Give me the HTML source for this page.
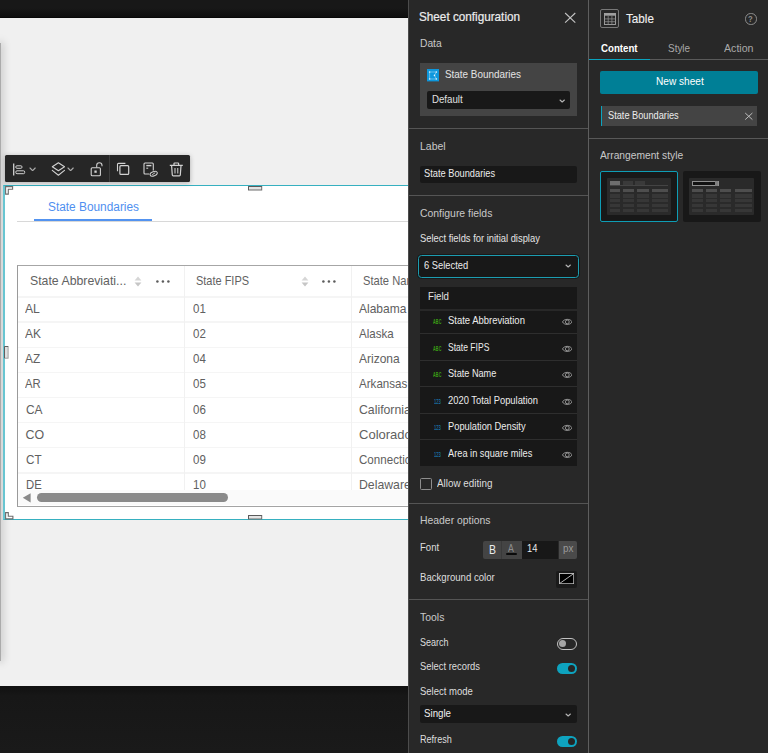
<!DOCTYPE html>
<html lang="en"><head><meta charset="utf-8"><title>Table widget - Sheet configuration</title>
<style>
html,body{margin:0;padding:0;background:#181818;}
body{width:768px;height:753px;position:relative;overflow:hidden;font-family:"Liberation Sans",sans-serif;}
.r{position:absolute;display:block;}
.t{position:absolute;white-space:nowrap;line-height:1;transform-origin:0 0;}
#cv{position:absolute;left:0;top:0;width:408px;height:753px;overflow:hidden;}
#pn{position:absolute;left:0;top:0;width:768px;height:753px;}

</style></head><body>
<div id="cv">
<div class="r" style="left:0.00px;top:0.00px;width:768.00px;height:17.60px;background:#171717;background:linear-gradient(#181818 0,#181818 8px,#0e0e0e 100%);"></div>
<div class="r" style="left:0.00px;top:686.20px;width:768.00px;height:66.80px;background:#181818;background:linear-gradient(#111 0,#171717 10px,#1a1a1a 100%);"></div>
<div class="r" style="left:0.00px;top:17.60px;width:408.00px;height:668.60px;background:#f0f0f0;"></div>
<div class="r" style="left:0.00px;top:16.90px;width:408.00px;height:0.70px;background:#080808;"></div>
<div class="r" style="left:-1.00px;top:43.00px;width:1.90px;height:617.70px;background:#ababab;box-shadow:0 0 9px 1px rgba(0,0,0,.28);"></div>
<div class="r" style="left:3.1px;top:184.9px;width:420px;height:335.2px;background:#fff;border-left:2.1px solid #68c5d1;border-top:1.7px solid #36b0c0;border-bottom:1.5px solid #36b0c0;box-sizing:border-box"></div>
<div class="r" style="left:4.80px;top:154.50px;width:185.70px;height:27.30px;background:#262626;border-radius:1.5px;box-shadow:0 1px 5px rgba(0,0,0,.28);"></div>
<div class="r" style="left:109.00px;top:154.50px;width:0.80px;height:27.30px;background:#3e3e3e;"></div>
<div class="t" style="left:48.03px;top:201px;font-size:12.5px;color:#4f8ff0;transform:scaleX(0.9489);">State Boundaries</div>
<div class="r" style="left:17.00px;top:220.70px;width:391.00px;height:1.00px;background:#d8d8d8;"></div>
<div class="r" style="left:34.00px;top:219.00px;width:118.00px;height:2.10px;background:#5393f0;"></div>
<div class="r" style="left:17.2px;top:264.9px;width:420px;height:242.1px;background:#fff;border:1.3px solid #9a9a9a;border-top:1.9px solid #a6a6a6;border-bottom:1.7px solid #a4a4a4;box-sizing:border-box"></div>
<div class="r" style="left:18.00px;top:296.20px;width:390.00px;height:1.40px;background:#f5f5f5;"></div>
<div class="r" style="left:18.00px;top:321.35px;width:390.00px;height:1.40px;background:#f5f5f5;"></div>
<div class="r" style="left:18.00px;top:346.50px;width:390.00px;height:1.40px;background:#f5f5f5;"></div>
<div class="r" style="left:18.00px;top:371.65px;width:390.00px;height:1.40px;background:#f5f5f5;"></div>
<div class="r" style="left:18.00px;top:396.80px;width:390.00px;height:1.40px;background:#f5f5f5;"></div>
<div class="r" style="left:18.00px;top:421.95px;width:390.00px;height:1.40px;background:#f5f5f5;"></div>
<div class="r" style="left:18.00px;top:447.10px;width:390.00px;height:1.40px;background:#f5f5f5;"></div>
<div class="r" style="left:18.00px;top:472.25px;width:390.00px;height:1.40px;background:#f5f5f5;"></div>
<div class="r" style="left:183.90px;top:266.40px;width:1.10px;height:223.60px;background:#f1f1f1;"></div>
<div class="r" style="left:350.90px;top:266.40px;width:1.10px;height:223.60px;background:#f1f1f1;"></div>
<div class="t" style="left:29.50px;top:275px;font-size:12.4px;color:#626262;transform:scaleX(0.9918);">State Abbreviati...</div>
<div class="t" style="left:196.46px;top:275px;font-size:12.4px;color:#626262;transform:scaleX(0.8856);">State FIPS</div>
<div class="t" style="left:363.15px;top:275px;font-size:12.4px;color:#626262;transform:scaleX(0.9000);">State Name</div>
<div class="t" style="left:25.11px;top:303px;font-size:12.4px;color:#606060;transform:scaleX(0.9824);">AL</div>
<div class="t" style="left:192.94px;top:303px;font-size:12.4px;color:#606060;transform:scaleX(0.9300);">01</div>
<div class="t" style="left:359.42px;top:303px;font-size:12.4px;color:#606060;transform:scaleX(0.9685);">Alabama</div>
<div class="t" style="left:25.12px;top:328px;font-size:12.4px;color:#606060;transform:scaleX(0.9673);">AK</div>
<div class="t" style="left:192.94px;top:328px;font-size:12.4px;color:#606060;transform:scaleX(0.9300);">02</div>
<div class="t" style="left:359.43px;top:328px;font-size:12.4px;color:#606060;transform:scaleX(0.9323);">Alaska</div>
<div class="t" style="left:25.12px;top:353px;font-size:12.4px;color:#606060;transform:scaleX(0.9593);">AZ</div>
<div class="t" style="left:192.94px;top:353px;font-size:12.4px;color:#606060;transform:scaleX(0.9300);">04</div>
<div class="t" style="left:359.42px;top:353px;font-size:12.4px;color:#606060;transform:scaleX(0.9680);">Arizona</div>
<div class="t" style="left:25.14px;top:378px;font-size:12.4px;color:#606060;transform:scaleX(0.9115);">AR</div>
<div class="t" style="left:192.94px;top:378px;font-size:12.4px;color:#606060;transform:scaleX(0.9300);">05</div>
<div class="t" style="left:359.43px;top:378px;font-size:12.4px;color:#606060;transform:scaleX(0.9350);">Arkansas</div>
<div class="t" style="left:25.52px;top:404px;font-size:12.4px;color:#606060;transform:scaleX(0.9637);">CA</div>
<div class="t" style="left:192.94px;top:404px;font-size:12.4px;color:#606060;transform:scaleX(0.9300);">06</div>
<div class="t" style="left:359.40px;top:404px;font-size:12.4px;color:#606060;transform:scaleX(0.9900);">California</div>
<div class="t" style="left:25.50px;top:429px;font-size:12.4px;color:#606060;transform:scaleX(1.0000);">CO</div>
<div class="t" style="left:192.94px;top:429px;font-size:12.4px;color:#606060;transform:scaleX(0.9300);">08</div>
<div class="t" style="left:359.38px;top:429px;font-size:12.4px;color:#606060;transform:scaleX(1.0500);">Colorado</div>
<div class="t" style="left:25.53px;top:454px;font-size:12.4px;color:#606060;transform:scaleX(0.9438);">CT</div>
<div class="t" style="left:192.94px;top:454px;font-size:12.4px;color:#606060;transform:scaleX(0.9300);">09</div>
<div class="t" style="left:359.43px;top:454px;font-size:12.4px;color:#606060;transform:scaleX(0.9350);">Connecticut</div>
<div class="t" style="left:25.64px;top:479px;font-size:12.4px;color:#606060;transform:scaleX(0.9115);">DE</div>
<div class="t" style="left:192.94px;top:479px;font-size:12.4px;color:#606060;transform:scaleX(0.9300);">10</div>
<div class="t" style="left:359.40px;top:479px;font-size:12.4px;color:#606060;transform:scaleX(0.9900);">Delaware</div>
<div class="r" style="left:18.00px;top:490.00px;width:390.00px;height:15.40px;background:#fafafa;"></div>
<div class="r" style="left:37.00px;top:493.00px;width:191.00px;height:9.30px;background:#8a8a8a;border-radius:5px;"></div>
<svg class="r" style="left:22px;top:492px" width="10" height="12" viewBox="0 0 10 12"><path d="M0.8 5.8 L8.6 1.2 L8.6 10.4 Z" fill="#8a8a8a"/></svg>
<svg class="r" style="left:11.5px;top:162.5px" width="15" height="14" viewBox="0 0 15 14"><path d="M1.7 0.5 V12.6" stroke="#d2d2d2" stroke-width="1.3" fill="none"/><rect x="3.8" y="2.8" width="6.2" height="2.5" rx="1.1" fill="none" stroke="#d2d2d2" stroke-width="1"/><rect x="3.8" y="7.8" width="8.9" height="2.9" rx="1.2" fill="none" stroke="#d2d2d2" stroke-width="1"/></svg>
<svg class="r" style="left:28.6px;top:166.6px" width="7.2" height="4.7" viewBox="-1 -1 7.2 4.7"><path d="M0 0 L2.6 2.7 L5.2 0" stroke="#aaaaaa" stroke-width="1.15" stroke-linejoin="round" stroke-linecap="round" fill="none"/></svg>
<svg class="r" style="left:50.5px;top:161.8px" width="15" height="15" viewBox="0 0 15 15"><path d="M7.4 0.8 L13.5 4.8 L7.4 8.8 L1.3 4.8 Z" fill="none" stroke="#d2d2d2" stroke-width="1.1" stroke-linejoin="round"/><path d="M1.3 8.4 L7.4 13.2 L13.5 8.4" fill="none" stroke="#d2d2d2" stroke-width="1.1" stroke-linejoin="round" stroke-linecap="round"/></svg>
<svg class="r" style="left:67.4px;top:166.6px" width="7.2" height="4.7" viewBox="-1 -1 7.2 4.7"><path d="M0 0 L2.6 2.7 L5.2 0" stroke="#aaaaaa" stroke-width="1.15" stroke-linejoin="round" stroke-linecap="round" fill="none"/></svg>
<svg class="r" style="left:89.5px;top:161.5px" width="14" height="15" viewBox="0 0 14 15"><rect x="1.2" y="5.8" width="9.2" height="8" rx="1" fill="none" stroke="#d2d2d2" stroke-width="1.1"/><rect x="4.4" y="8.5" width="2.3" height="2.3" fill="#d2d2d2"/><path d="M6.7 5.6 V3.2 C6.7 0 12 0 12 3.2 V4.2" fill="none" stroke="#d2d2d2" stroke-width="1.1"/></svg>
<svg class="r" style="left:116px;top:162px" width="15" height="14" viewBox="0 0 15 14"><rect x="3.9" y="3.7" width="8.8" height="8.7" rx="1" fill="none" stroke="#d2d2d2" stroke-width="1.2"/><path d="M1.5 9.2 V2.4 C1.5 1.8 1.9 1.4 2.5 1.4 H9.4" fill="none" stroke="#d2d2d2" stroke-width="1.1"/></svg>
<svg class="r" style="left:142.5px;top:161.5px" width="16" height="15" viewBox="0 0 16 15"><path d="M6.4 12 H2 C1.4 12 1 11.6 1 11 V2 C1 1.4 1.4 1 2 1 H9.3 C9.9 1 10.3 1.4 10.3 2 V8.4" fill="none" stroke="#d2d2d2" stroke-width="1.1"/><path d="M3.3 3.6 H8.4" stroke="#d2d2d2" stroke-width="1.4"/><path d="M3.3 6.2 H5.2" stroke="#d2d2d2" stroke-width="1.1"/><ellipse cx="10.7" cy="11.7" rx="3.7" ry="2.1" fill="#262626" stroke="#d2d2d2" stroke-width="1" transform="rotate(-20 10.7 11.7)"/><path d="M9.2 12.7 L12.2 10.7" stroke="#d2d2d2" stroke-width="0.9"/></svg>
<svg class="r" style="left:169px;top:161.5px" width="15" height="15" viewBox="0 0 15 15"><path d="M0.8 3.4 H13.8 M5 3.2 V1.6 C5 1.2 5.3 1 5.6 1 H9 C9.3 1 9.6 1.2 9.6 1.6 V3.2" fill="none" stroke="#d2d2d2" stroke-width="1.2"/><path d="M2.6 3.6 L3.3 13 C3.35 13.5 3.7 13.8 4.2 13.8 H10.4 C10.9 13.8 11.25 13.5 11.3 13 L12 3.6" fill="none" stroke="#d2d2d2" stroke-width="1.2"/><path d="M6 6 V11.4 M8.7 6 V11.4" stroke="#a2a2a2" stroke-width="1.4"/></svg>
<svg class="r" style="left:4.9px;top:186.3px" width="9" height="9" viewBox="0 0 9 9"><path d="M0.6 0.6 H7.6 V3.3 H3.3 V8.1 H0.6 Z" fill="#fff" stroke="#6c6c6c" stroke-width="1.1"/></svg>
<svg class="r" style="left:4.9px;top:512.2px" width="9" height="8" viewBox="0 0 9 8"><path d="M0.6 0.6 V6.9 H7.9 V4.2 H3.3 V0.6 Z" fill="#fff" stroke="#6c6c6c" stroke-width="1.1"/></svg>
<svg class="r" style="left:248px;top:186px" width="15" height="5" viewBox="0 0 15 5"><rect x="0.5" y="0.5" width="13.2" height="3.5" fill="#e4e4e4" stroke="#6c6c6c" stroke-width="1"/><path d="M0.5 4 V0.5 H13.7" stroke="#5a5a5a" stroke-width="1" fill="none"/></svg>
<svg class="r" style="left:248px;top:515px" width="15" height="5" viewBox="0 0 15 5"><rect x="0.5" y="0.5" width="13.2" height="3.5" fill="#e4e4e4" stroke="#6c6c6c" stroke-width="1"/><path d="M0.5 4 V0.5 H13.7" stroke="#5a5a5a" stroke-width="1" fill="none"/></svg>
<svg class="r" style="left:4.2px;top:346.2px" width="5" height="13" viewBox="0 0 5 13"><rect x="0.5" y="0.5" width="3.6" height="11.7" fill="#e0e0e0" stroke="#a0a0a0" stroke-width="1"/><path d="M0.5 12.2 V0.5 H4.1" stroke="#5e5e5e" stroke-width="1" fill="none"/></svg>
<svg class="r" style="left:134px;top:275.5px" width="8" height="11" viewBox="0 0 8 11"><path d="M4 0.4 L7.4 4.6 H0.6 Z" fill="#d6d6d6"/><path d="M4 10.6 L7.4 6.4 H0.6 Z" fill="#c6c6c6"/></svg>
<svg class="r" style="left:155.5px;top:279.6px" width="14" height="3" viewBox="0 0 14 3"><circle cx="1.4" cy="1.5" r="1.25" fill="#5c5c5c"/><circle cx="6.9" cy="1.5" r="1.25" fill="#5c5c5c"/><circle cx="12.4" cy="1.5" r="1.25" fill="#5c5c5c"/></svg>
<svg class="r" style="left:301.2px;top:275.5px" width="8" height="11" viewBox="0 0 8 11"><path d="M4 0.4 L7.4 4.6 H0.6 Z" fill="#d6d6d6"/><path d="M4 10.6 L7.4 6.4 H0.6 Z" fill="#c6c6c6"/></svg>
<svg class="r" style="left:322.4px;top:279.6px" width="14" height="3" viewBox="0 0 14 3"><circle cx="1.4" cy="1.5" r="1.25" fill="#5c5c5c"/><circle cx="6.9" cy="1.5" r="1.25" fill="#5c5c5c"/><circle cx="12.4" cy="1.5" r="1.25" fill="#5c5c5c"/></svg>
</div>
<div id="pn">
<div class="r" style="left:408.00px;top:0.00px;width:180.20px;height:753.00px;background:#282828;"></div>
<div class="r" style="left:408.00px;top:0.00px;width:1.30px;height:753.00px;background:#4c4c4c;"></div>
<div class="r" style="left:588.20px;top:0.00px;width:179.80px;height:753.00px;background:#282828;"></div>
<div class="r" style="left:588.00px;top:0.00px;width:1.20px;height:753.00px;background:#5e5e5e;"></div>
<div class="t" style="left:419.41px;top:12px;font-size:11.9px;color:#ececec;transform:scaleX(0.9859);-webkit-text-stroke:0.2px #ececec;">Sheet configuration</div>
<svg class="r" style="left:563px;top:11px" width="14" height="14" viewBox="0 0 14 14"><path d="M2.1 2 L12.3 11.7 M12.3 2 L2.1 11.7" stroke="#c4c4c4" stroke-width="1.1" fill="none"/></svg>
<div class="t" style="left:419.53px;top:38px;font-size:10.9px;color:#c8c8c8;transform:scaleX(0.9425);">Data</div>
<div class="r" style="left:419.90px;top:62.60px;width:157.10px;height:53.70px;background:#444;"></div>
<svg class="r" style="left:427.1px;top:69.4px" width="12.2" height="12.4" viewBox="0 0 12.2 12.4"><rect width="12.2" height="12.4" fill="#0d97dd"/><path d="M2.6 3 L9.4 3 L7.5 6.4 L9.4 10 L2.6 10 Z" fill="none" stroke="#fff" stroke-opacity=".45" stroke-width="0.8"/><g fill="#fff" fill-opacity=".85"><circle cx="2.6" cy="3" r="0.8"/><circle cx="9.4" cy="3" r="0.8"/><circle cx="7.5" cy="6.4" r="0.8"/><circle cx="9.4" cy="10" r="0.8"/><circle cx="2.6" cy="10" r="0.8"/></g></svg>
<div class="t" style="left:444.53px;top:69px;font-size:10.6px;color:#e4e4e4;transform:scaleX(0.9345);">State Boundaries</div>
<div class="r" style="left:427.00px;top:91.30px;width:142.50px;height:17.80px;background:#181818;border-radius:2px;"></div>
<div class="t" style="left:431.53px;top:95px;font-size:10.2px;color:#e0e0e0;transform:scaleX(0.9499);">Default</div>
<svg class="r" style="left:558.6px;top:98.9px" width="6.4" height="4.0" viewBox="-1 -1 6.4 4.0"><path d="M0 0 L2.2 2.0 L4.4 0" stroke="#b4b4b4" stroke-width="1.12" stroke-linejoin="round" stroke-linecap="round" fill="none"/></svg>
<div class="r" style="left:408.60px;top:128.10px;width:179.40px;height:1.00px;background:#555;"></div>
<div class="t" style="left:419.52px;top:141px;font-size:10.9px;color:#c8c8c8;transform:scaleX(0.9598);">Label</div>
<div class="r" style="left:420.00px;top:166.30px;width:157.00px;height:16.70px;background:#181818;border-radius:2px;"></div>
<div class="t" style="left:424.35px;top:169px;font-size:10.2px;color:#ececec;transform:scaleX(0.9098);">State Boundaries</div>
<div class="r" style="left:408.60px;top:194.80px;width:179.40px;height:1.00px;background:#555;"></div>
<div class="t" style="left:419.52px;top:208px;font-size:10.9px;color:#c8c8c8;transform:scaleX(0.9559);">Configure fields</div>
<div class="t" style="left:419.54px;top:234px;font-size:10.2px;color:#e4e4e4;transform:scaleX(0.9202);">Select fields for initial display</div>
<div class="r" style="left:418.2px;top:255.2px;width:160.4px;height:22.5px;background:#181818;border:1.6px solid #1c9db1;border-radius:3.5px;box-sizing:border-box;box-shadow:0 0 0 0.8px #141414"></div>
<div class="t" style="left:424.34px;top:261px;font-size:10.2px;color:#ececec;transform:scaleX(0.9169);">6 Selected</div>
<svg class="r" style="left:565.2px;top:264.0px" width="6.4" height="4.0" viewBox="-1 -1 6.4 4.0"><path d="M0 0 L2.2 2.0 L4.4 0" stroke="#b4b4b4" stroke-width="1.12" stroke-linejoin="round" stroke-linecap="round" fill="none"/></svg>
<div class="r" style="left:420.00px;top:287.00px;width:157.00px;height:21.70px;background:#181818;"></div>
<div class="t" style="left:427.83px;top:292px;font-size:10.4px;color:#e4e4e4;transform:scaleX(0.9315);">Field</div>
<div class="r" style="left:420.00px;top:311.10px;width:157.00px;height:154.70px;background:#2e2e2e;"></div>
<div class="r" style="left:420.00px;top:311.10px;width:157.00px;height:21.90px;background:#181818;"></div>
<div class="t" style="left:433.1px;top:319px;font-size:6.4px;font-weight:700;color:#3a9f14;transform:scaleX(.58);transform-origin:0 0;letter-spacing:.3px">ABC</div>
<div class="t" style="left:448.34px;top:316px;font-size:10.2px;color:#ececec;transform:scaleX(0.9300);">State Abbreviation</div>
<svg class="r" style="left:561.5px;top:317.6px" width="10.6" height="7.8" viewBox="0 0 10.6 7.8"><path d="M0.5 3.9 C2 0.5 8.6 0.5 10.1 3.9 C8.6 7.3 2 7.3 0.5 3.9 Z" fill="none" stroke="#a6a6a6" stroke-width="0.85"/><circle cx="5.3" cy="3.9" r="1.9" fill="none" stroke="#a6a6a6" stroke-width="0.85"/></svg>
<div class="r" style="left:420.00px;top:334.00px;width:157.00px;height:26.10px;background:#181818;"></div>
<div class="t" style="left:433.1px;top:346px;font-size:6.4px;font-weight:700;color:#3a9f14;transform:scaleX(.58);transform-origin:0 0;letter-spacing:.3px">ABC</div>
<div class="t" style="left:448.38px;top:343px;font-size:10.2px;color:#ececec;transform:scaleX(0.8393);">State FIPS</div>
<svg class="r" style="left:561.5px;top:344.6px" width="10.6" height="7.8" viewBox="0 0 10.6 7.8"><path d="M0.5 3.9 C2 0.5 8.6 0.5 10.1 3.9 C8.6 7.3 2 7.3 0.5 3.9 Z" fill="none" stroke="#a6a6a6" stroke-width="0.85"/><circle cx="5.3" cy="3.9" r="1.9" fill="none" stroke="#a6a6a6" stroke-width="0.85"/></svg>
<div class="r" style="left:420.00px;top:361.10px;width:157.00px;height:24.70px;background:#181818;"></div>
<div class="t" style="left:433.1px;top:372px;font-size:6.4px;font-weight:700;color:#3a9f14;transform:scaleX(.58);transform-origin:0 0;letter-spacing:.3px">ABC</div>
<div class="t" style="left:448.35px;top:369px;font-size:10.2px;color:#ececec;transform:scaleX(0.8986);">State Name</div>
<svg class="r" style="left:561.5px;top:370.6px" width="10.6" height="7.8" viewBox="0 0 10.6 7.8"><path d="M0.5 3.9 C2 0.5 8.6 0.5 10.1 3.9 C8.6 7.3 2 7.3 0.5 3.9 Z" fill="none" stroke="#a6a6a6" stroke-width="0.85"/><circle cx="5.3" cy="3.9" r="1.9" fill="none" stroke="#a6a6a6" stroke-width="0.85"/></svg>
<div class="r" style="left:420.00px;top:386.80px;width:157.00px;height:26.00px;background:#181818;"></div>
<div class="t" style="left:433.6px;top:399px;font-size:6.4px;color:#1b8fcc;transform:scaleX(.64);transform-origin:0 0;">123</div>
<div class="t" style="left:448.34px;top:396px;font-size:10.2px;color:#ececec;transform:scaleX(0.9200);">2020 Total Population</div>
<svg class="r" style="left:561.5px;top:397.6px" width="10.6" height="7.8" viewBox="0 0 10.6 7.8"><path d="M0.5 3.9 C2 0.5 8.6 0.5 10.1 3.9 C8.6 7.3 2 7.3 0.5 3.9 Z" fill="none" stroke="#a6a6a6" stroke-width="0.85"/><circle cx="5.3" cy="3.9" r="1.9" fill="none" stroke="#a6a6a6" stroke-width="0.85"/></svg>
<div class="r" style="left:420.00px;top:413.80px;width:157.00px;height:25.50px;background:#181818;"></div>
<div class="t" style="left:433.6px;top:425px;font-size:6.4px;color:#1b8fcc;transform:scaleX(.64);transform-origin:0 0;">123</div>
<div class="t" style="left:448.34px;top:422px;font-size:10.2px;color:#ececec;transform:scaleX(0.9135);">Population Density</div>
<svg class="r" style="left:561.5px;top:423.6px" width="10.6" height="7.8" viewBox="0 0 10.6 7.8"><path d="M0.5 3.9 C2 0.5 8.6 0.5 10.1 3.9 C8.6 7.3 2 7.3 0.5 3.9 Z" fill="none" stroke="#a6a6a6" stroke-width="0.85"/><circle cx="5.3" cy="3.9" r="1.9" fill="none" stroke="#a6a6a6" stroke-width="0.85"/></svg>
<div class="r" style="left:420.00px;top:440.30px;width:157.00px;height:25.50px;background:#181818;"></div>
<div class="t" style="left:433.6px;top:452px;font-size:6.4px;color:#1b8fcc;transform:scaleX(.64);transform-origin:0 0;">123</div>
<div class="t" style="left:448.35px;top:449px;font-size:10.2px;color:#ececec;transform:scaleX(0.9077);">Area in square miles</div>
<svg class="r" style="left:561.5px;top:450.6px" width="10.6" height="7.8" viewBox="0 0 10.6 7.8"><path d="M0.5 3.9 C2 0.5 8.6 0.5 10.1 3.9 C8.6 7.3 2 7.3 0.5 3.9 Z" fill="none" stroke="#a6a6a6" stroke-width="0.85"/><circle cx="5.3" cy="3.9" r="1.9" fill="none" stroke="#a6a6a6" stroke-width="0.85"/></svg>
<div class="r" style="left:420.3px;top:478.1px;width:11.5px;height:11.7px;border:1px solid #8e8e8e;border-radius:1.5px;box-sizing:border-box"></div>
<div class="t" style="left:436.52px;top:479px;font-size:10.3px;color:#dedede;transform:scaleX(0.9580);">Allow editing</div>
<div class="r" style="left:408.60px;top:502.80px;width:179.40px;height:1.00px;background:#555;"></div>
<div class="t" style="left:419.52px;top:515px;font-size:10.9px;color:#c8c8c8;transform:scaleX(0.9550);">Header options</div>
<div class="t" style="left:419.53px;top:543px;font-size:10.2px;color:#dedede;transform:scaleX(0.9406);">Font</div>
<div class="r" style="left:483.00px;top:541.30px;width:38.80px;height:17.30px;background:#444;border-radius:2px 0 0 2px;"></div>
<div class="r" style="left:501.20px;top:541.30px;width:0.60px;height:17.30px;background:#3a3a3a;"></div>
<div class="t" style="left:488.67px;top:544px;font-size:12px;color:#ececec;transform:scaleX(0.8700);-webkit-text-stroke:0;">B</div>
<div class="t" style="left:507.96px;top:544px;font-size:10px;color:#8e8e8e;transform:scaleX(0.8700);-webkit-text-stroke:0;">A</div>
<div class="r" style="left:506.30px;top:553.40px;width:10.70px;height:1.70px;background:#0a0a0a;border-radius:1px;"></div>
<div class="r" style="left:521.80px;top:541.30px;width:35.90px;height:17.30px;background:#181818;"></div>
<div class="t" style="left:527.35px;top:544px;font-size:10.3px;color:#ececec;transform:scaleX(0.9078);-webkit-text-stroke:0;">14</div>
<div class="r" style="left:558.90px;top:541.30px;width:17.90px;height:17.30px;background:#4a4a4a;border-radius:0 2px 2px 0;"></div>
<div class="t" style="left:562.72px;top:544px;font-size:10.2px;color:#9a9a9a;transform:scaleX(0.9653);">px</div>
<div class="t" style="left:419.53px;top:573px;font-size:10.2px;color:#dedede;transform:scaleX(0.9423);">Background color</div>
<div class="r" style="left:556.00px;top:570.50px;width:20.80px;height:17.30px;background:#1a1a1a;border-radius:2px;"></div>
<svg class="r" style="left:558.7px;top:573.2px" width="15.2" height="11.2" viewBox="0 0 15.2 11.2"><rect x="0.45" y="0.45" width="14.3" height="10.3" fill="#000" stroke="#c4c4c4" stroke-width="0.9"/><path d="M0.8 10.4 L14.4 0.8" stroke="#c4c4c4" stroke-width="0.9"/></svg>
<div class="r" style="left:408.60px;top:599.00px;width:179.40px;height:1.00px;background:#555;"></div>
<div class="t" style="left:419.52px;top:612px;font-size:10.9px;color:#c8c8c8;transform:scaleX(0.9589);">Tools</div>
<div class="t" style="left:419.56px;top:638px;font-size:10.2px;color:#dedede;transform:scaleX(0.8849);">Search</div>
<div class="r" style="left:557.2px;top:638.3px;width:19.8px;height:11.4px;border:1px solid #c2c2c2;border-radius:6px;box-sizing:border-box"></div><div class="r" style="left:559.4000000000001px;top:640.4px;width:7px;height:7px;background:#a6a6a6;border-radius:50%"></div>
<div class="t" style="left:419.54px;top:662px;font-size:10.2px;color:#dedede;transform:scaleX(0.9203);">Select records</div>
<div class="r" style="left:557.2px;top:662.6px;width:19.8px;height:11.4px;background:#0ea3bf;border-radius:6px"></div><div class="r" style="left:567.7px;top:664.6px;width:7.2px;height:7.2px;background:#262626;border-radius:50%"></div>
<div class="t" style="left:419.53px;top:687px;font-size:10.2px;color:#dedede;transform:scaleX(0.9312);">Select mode</div>
<div class="r" style="left:420.00px;top:705.10px;width:157.00px;height:18.10px;background:#181818;border-radius:2px;"></div>
<div class="t" style="left:424.33px;top:709px;font-size:10.3px;color:#f0f0f0;transform:scaleX(0.9430);">Single</div>
<svg class="r" style="left:565.2px;top:713.3px" width="6.4" height="4.0" viewBox="-1 -1 6.4 4.0"><path d="M0 0 L2.2 2.0 L4.4 0" stroke="#b4b4b4" stroke-width="1.12" stroke-linejoin="round" stroke-linecap="round" fill="none"/></svg>
<div class="t" style="left:419.55px;top:735px;font-size:10.2px;color:#dedede;transform:scaleX(0.8903);">Refresh</div>
<div class="r" style="left:557.2px;top:735.6px;width:19.8px;height:11.4px;background:#0ea3bf;border-radius:6px"></div><div class="r" style="left:567.7px;top:737.6px;width:7.2px;height:7.2px;background:#262626;border-radius:50%"></div>
<div class="r" style="left:600.2px;top:9.4px;width:18.4px;height:18.4px;border:1px solid #787878;border-radius:2px;box-sizing:border-box"></div>
<svg class="r" style="left:603.6px;top:12.8px" width="12" height="12" viewBox="0 0 12 12"><rect x="0.5" y="0.5" width="11" height="11" fill="none" stroke="#a8a8a8" stroke-width="0.9"/><rect x="0.5" y="0.5" width="11" height="2.2" fill="#a0a0a0"/><path d="M0.5 5.9 H11.5 M0.5 8.7 H11.5 M4.2 3 V11.5 M7.9 3 V11.5" stroke="#909090" stroke-width="0.75" fill="none"/></svg>
<div class="t" style="left:626.22px;top:13px;font-size:12.2px;color:#f0f0f0;transform:scaleX(0.9567);-webkit-text-stroke:0.12px #f0f0f0;">Table</div>
<div class="r" style="left:745.2px;top:13.4px;width:11.4px;height:11.4px;border:1.1px solid #8e8e8e;border-radius:50%;box-sizing:border-box"></div>
<div class="t" style="left:748.39px;top:14px;font-size:9.4px;color:#8e8e8e;transform:scaleX(0.8200);font-weight:700;">?</div>
<div class="t" style="left:601.12px;top:44px;font-size:10px;color:#ffffff;transform:scaleX(0.9691);font-weight:700;">Content</div>
<div class="t" style="left:668.42px;top:44px;font-size:10.3px;color:#a9a9a9;transform:scaleX(0.9651);">Style</div>
<div class="t" style="left:724.48px;top:44px;font-size:10.3px;color:#a9a9a9;transform:scaleX(1.0305);">Action</div>
<div class="r" style="left:589.20px;top:58.80px;width:178.80px;height:1.00px;background:#5a5a5a;"></div>
<div class="r" style="left:589.20px;top:58.50px;width:60.80px;height:1.40px;background:#0aa4bf;"></div>
<div class="r" style="left:600.00px;top:71.30px;width:158.40px;height:22.40px;background:#007f96;border-radius:2px;"></div>
<div class="t" style="left:655.51px;top:77px;font-size:10.4px;color:#ffffff;transform:scaleX(0.9728);">New sheet</div>
<div class="r" style="left:600.80px;top:106.20px;width:156.60px;height:19.60px;background:#444;"></div>
<div class="r" style="left:600.70px;top:106.20px;width:1.30px;height:19.60px;background:#0aa4bf;"></div>
<div class="t" style="left:607.55px;top:111px;font-size:10.2px;color:#ececec;transform:scaleX(0.9047);">State Boundaries</div>
<svg class="r" style="left:743.5px;top:111.5px" width="10" height="9" viewBox="0 0 10 9"><path d="M1.2 1 L8.4 7.6 M8.4 1 L1.2 7.6" stroke="#bdbdbd" stroke-width="1" fill="none"/></svg>
<div class="r" style="left:589.20px;top:138.10px;width:178.80px;height:1.00px;background:#585858;"></div>
<div class="t" style="left:599.73px;top:150px;font-size:10.9px;color:#c8c8c8;transform:scaleX(0.9406);">Arrangement style</div>
<div class="r" style="left:600.2px;top:171.2px;width:77.6px;height:50.4px;background:#181818;border:1.2px solid #0e9db5;border-radius:2px;box-sizing:border-box"></div>
<div class="r" style="left:683.00px;top:171.20px;width:78.40px;height:50.40px;background:#181818;border-radius:2px;"></div>
<div class="r" style="left:606.70px;top:177.70px;width:64.50px;height:37.50px;background:#2a2a2a;border-radius:1px;"></div>
<div class="r" style="left:689.20px;top:177.70px;width:65.20px;height:37.50px;background:#2a2a2a;border-radius:1px;"></div>
<div class="r" style="left:609.60px;top:181.00px;width:10.70px;height:4.40px;background:#6e6e6e;"></div>
<div class="r" style="left:622.50px;top:181.00px;width:10.00px;height:4.40px;background:#3a3a3a;"></div>
<div class="r" style="left:634.90px;top:181.00px;width:10.10px;height:4.40px;background:#3a3a3a;"></div>
<div class="r" style="left:609.60px;top:185.40px;width:58.80px;height:0.60px;background:#444;"></div>
<div class="r" style="left:609.60px;top:188.50px;width:10.70px;height:3.80px;background:#4e4e4e;"></div>
<div class="r" style="left:609.60px;top:194.20px;width:10.70px;height:3.40px;background:#373737;"></div>
<div class="r" style="left:609.60px;top:199.20px;width:10.70px;height:3.30px;background:#373737;"></div>
<div class="r" style="left:609.60px;top:204.20px;width:10.70px;height:3.30px;background:#373737;"></div>
<div class="r" style="left:609.60px;top:209.10px;width:10.70px;height:3.30px;background:#373737;"></div>
<div class="r" style="left:623.00px;top:188.50px;width:11.20px;height:3.80px;background:#4e4e4e;"></div>
<div class="r" style="left:623.00px;top:194.20px;width:11.20px;height:3.40px;background:#373737;"></div>
<div class="r" style="left:623.00px;top:199.20px;width:11.20px;height:3.30px;background:#373737;"></div>
<div class="r" style="left:623.00px;top:204.20px;width:11.20px;height:3.30px;background:#373737;"></div>
<div class="r" style="left:623.00px;top:209.10px;width:11.20px;height:3.30px;background:#373737;"></div>
<div class="r" style="left:637.00px;top:188.50px;width:11.70px;height:3.80px;background:#4e4e4e;"></div>
<div class="r" style="left:637.00px;top:194.20px;width:11.70px;height:3.40px;background:#373737;"></div>
<div class="r" style="left:637.00px;top:199.20px;width:11.70px;height:3.30px;background:#373737;"></div>
<div class="r" style="left:637.00px;top:204.20px;width:11.70px;height:3.30px;background:#373737;"></div>
<div class="r" style="left:637.00px;top:209.10px;width:11.70px;height:3.30px;background:#373737;"></div>
<div class="r" style="left:651.70px;top:188.50px;width:16.70px;height:3.80px;background:#4e4e4e;"></div>
<div class="r" style="left:651.70px;top:194.20px;width:16.70px;height:3.40px;background:#373737;"></div>
<div class="r" style="left:651.70px;top:199.20px;width:16.70px;height:3.30px;background:#373737;"></div>
<div class="r" style="left:651.70px;top:204.20px;width:16.70px;height:3.30px;background:#373737;"></div>
<div class="r" style="left:651.70px;top:209.10px;width:16.70px;height:3.30px;background:#373737;"></div>
<div class="r" style="left:691.80px;top:188.50px;width:11.50px;height:3.80px;background:#4e4e4e;"></div>
<div class="r" style="left:691.80px;top:194.20px;width:11.50px;height:3.40px;background:#373737;"></div>
<div class="r" style="left:691.80px;top:199.20px;width:11.50px;height:3.30px;background:#373737;"></div>
<div class="r" style="left:691.80px;top:204.20px;width:11.50px;height:3.30px;background:#373737;"></div>
<div class="r" style="left:691.80px;top:209.10px;width:11.50px;height:3.30px;background:#373737;"></div>
<div class="r" style="left:705.90px;top:188.50px;width:11.50px;height:3.80px;background:#4e4e4e;"></div>
<div class="r" style="left:705.90px;top:194.20px;width:11.50px;height:3.40px;background:#373737;"></div>
<div class="r" style="left:705.90px;top:199.20px;width:11.50px;height:3.30px;background:#373737;"></div>
<div class="r" style="left:705.90px;top:204.20px;width:11.50px;height:3.30px;background:#373737;"></div>
<div class="r" style="left:705.90px;top:209.10px;width:11.50px;height:3.30px;background:#373737;"></div>
<div class="r" style="left:720.00px;top:188.50px;width:11.40px;height:3.80px;background:#4e4e4e;"></div>
<div class="r" style="left:720.00px;top:194.20px;width:11.40px;height:3.40px;background:#373737;"></div>
<div class="r" style="left:720.00px;top:199.20px;width:11.40px;height:3.30px;background:#373737;"></div>
<div class="r" style="left:720.00px;top:204.20px;width:11.40px;height:3.30px;background:#373737;"></div>
<div class="r" style="left:720.00px;top:209.10px;width:11.40px;height:3.30px;background:#373737;"></div>
<div class="r" style="left:735.00px;top:188.50px;width:16.60px;height:3.80px;background:#4e4e4e;"></div>
<div class="r" style="left:735.00px;top:194.20px;width:16.60px;height:3.40px;background:#373737;"></div>
<div class="r" style="left:735.00px;top:199.20px;width:16.60px;height:3.30px;background:#373737;"></div>
<div class="r" style="left:735.00px;top:204.20px;width:16.60px;height:3.30px;background:#373737;"></div>
<div class="r" style="left:735.00px;top:209.10px;width:16.60px;height:3.30px;background:#373737;"></div>
<div class="r" style="left:691.8px;top:180.6px;width:26.8px;height:5.4px;background:#121212;border:0.9px solid #909090;box-sizing:border-box"></div>
<div class="r" style="left:714.60px;top:181.20px;width:3.40px;height:4.40px;background:#7e7e7e;"></div>
</div>
</body></html>
